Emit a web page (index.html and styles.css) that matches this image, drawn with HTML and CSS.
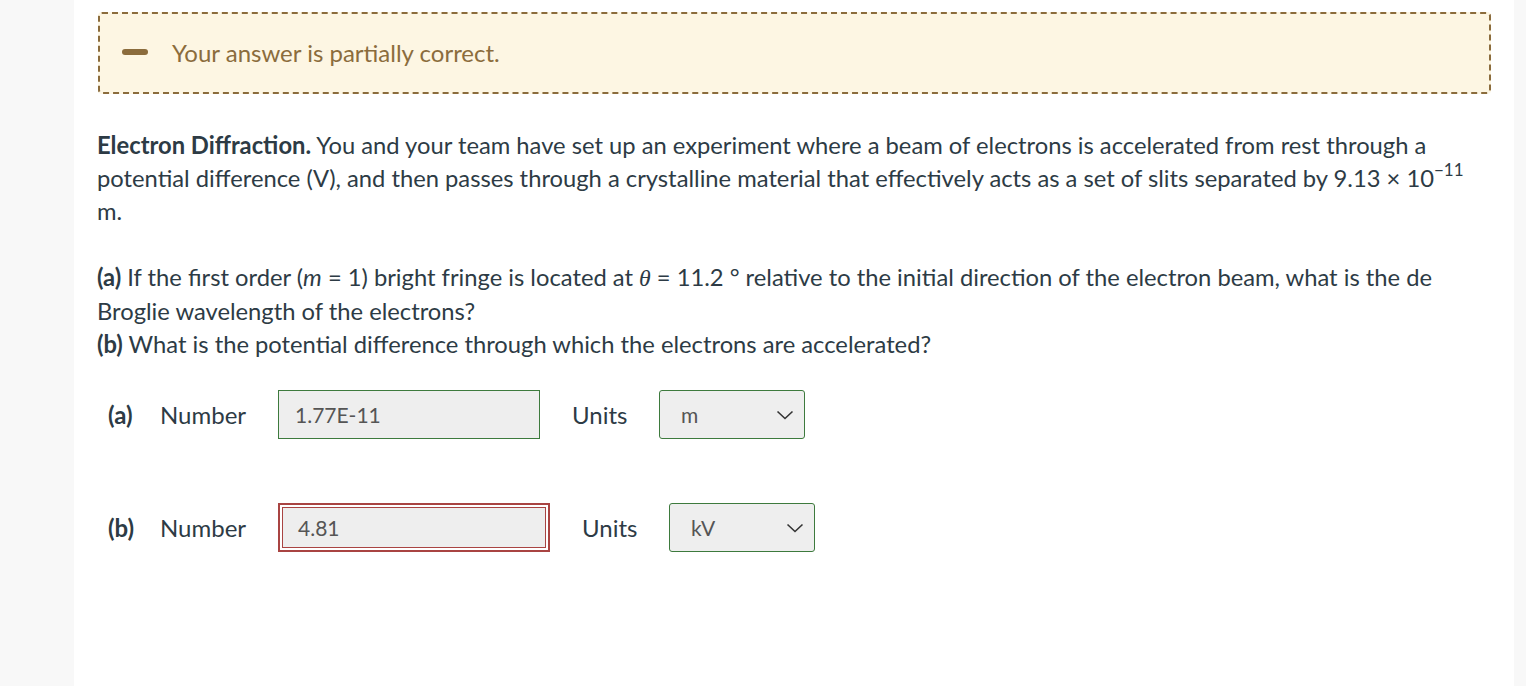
FILE: index.html
```html
<!DOCTYPE html>
<html lang="en">
<head>
  <meta charset="UTF-8">
  <title>Electron Diffraction</title>
  <link rel="stylesheet" href="styles.css">
</head>
<body>
  <div class="pagina">
    <div class="contenido">
      <div class="aviso">
        <span class="aviso-icono"></span>
        <span class="aviso-texto">Your answer is partially correct.</span>
      </div>

      <p class="enunciado">
        <b>Electron Diffraction.</b> You and your team have set up an experiment where a beam of electrons is accelerated from rest through a potential difference (V), and then passes through a crystalline material that effectively acts as a set of slits separated by 9.13 × 10<sup>−11</sup> m.
      </p>

      <p class="preguntas">
        <b>(a)</b> If the first order (<i>m</i> = 1) bright fringe is located at <i class="griega">θ</i> = 11.2 ° relative to the initial direction of the electron beam, what is the de Broglie wavelength of the electrons?<br>
        <b>(b)</b> What is the potential difference through which the electrons are accelerated?
      </p>

      <div class="respuesta">
        <span class="letra">(a)</span>
        <span class="etiqueta">Number</span>
        <div class="campo correcto">1.77E-11</div>
        <span class="unidades">Units</span>
        <div class="selector">
          <span>m</span>
          <svg width="18" height="10" viewBox="0 0 18 10"><path d="M1.5 1.5 L9 8.5 L16.5 1.5" fill="none" stroke="#333" stroke-width="1.6"/></svg>
        </div>
      </div>

      <div class="respuesta">
        <span class="letra">(b)</span>
        <span class="etiqueta">Number</span>
        <div class="campo incorrecto"><div class="interior">4.81</div></div>
        <span class="unidades">Units</span>
        <div class="selector">
          <span>kV</span>
          <svg width="18" height="10" viewBox="0 0 18 10"><path d="M1.5 1.5 L9 8.5 L16.5 1.5" fill="none" stroke="#333" stroke-width="1.6"/></svg>
        </div>
      </div>
    </div>
  </div>
</body>
</html>
```

FILE: styles.css
```css
html, body {
  margin: 0;
  padding: 0;
  height: 100%;
  overflow: hidden;
  background-color: #f8f8f8;
  font-family: 'Lato', sans-serif;
  color: #2d3b45;
}

.pagina {
  height: 100%;
  padding: 0 12px 0 74px;
}

.contenido {
  background: #ffffff;
  height: 100%;
  padding: 12px 23px 0 23px;
  box-sizing: border-box;
}

.aviso {
  display: flex;
  align-items: center;
  height: 82px;
  box-sizing: border-box;
  margin-left: 1px;
  border: 2px dashed #8b6c3c;
  border-radius: 4px;
  background: #fdf6e3;
  padding-left: 22px;
}

.aviso-icono {
  display: inline-block;
  width: 26px;
  height: 6px;
  border-radius: 3px;
  background: #8b6c3c;
  margin-top: -2px;
}

.aviso-texto {
  margin-left: 24px;
  font-size: 24px;
  color: #8b6c3c;
  margin-top: -2px;
}

.enunciado, .preguntas {
  font-size: 23.75px;
  line-height: 33px;
  margin: 0;
}

.enunciado {
  margin-top: 35px;
}

.preguntas {
  margin-top: 33px;
}

.griega {
  font-family: 'Liberation Serif', serif;
}

sup {
  font-size: 17px;
  line-height: 0;
  vertical-align: 11px;
}

.respuesta {
  display: flex;
  align-items: center;
  font-size: 24px;
  margin-left: 11px;
}

.preguntas + .respuesta {
  margin-top: 29px;
}

.respuesta + .respuesta {
  margin-top: 64px;
}

.letra {
  font-weight: bold;
  width: 52px;
}

.etiqueta {
  width: 118px;
}

.campo {
  width: 262px;
  height: 49px;
  box-sizing: border-box;
  background: #eeeeee;
  font-size: 21px;
  color: #555;
  display: flex;
  align-items: center;
  padding-left: 16px;
}

.campo.correcto {
  border: 1px solid #3d7a3d;
}

.campo.incorrecto {
  width: 272px;
  border: 2px solid #a94442;
  background: #ffffff;
  padding: 2px;
}

.campo.incorrecto .interior {
  flex: 1;
  height: 100%;
  box-sizing: border-box;
  border: 1px solid #a94442;
  background: #eeeeee;
  display: flex;
  align-items: center;
  padding-left: 15px;
}

.unidades {
  margin-left: 32px;
  width: 87px;
}

.selector {
  width: 146px;
  height: 49px;
  box-sizing: border-box;
  border: 1px solid #3d7a3d;
  border-radius: 3px;
  background: #eeeeee;
  display: flex;
  align-items: center;
  justify-content: space-between;
  padding: 0 10px 0 21px;
  font-size: 21px;
  color: #555;
}
```
